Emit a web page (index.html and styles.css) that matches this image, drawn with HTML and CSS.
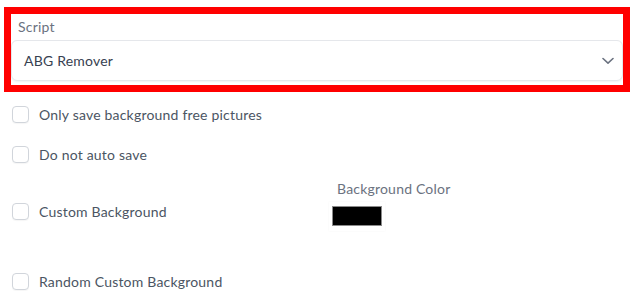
FILE: index.html
```html
<!DOCTYPE html>
<html lang="en">
  <head>
    <meta charset="UTF-8" />
    <title>ABG Remover</title>
    <link rel="stylesheet" href="styles.css">
  </head>
  <body>
    <div class="page">
      <div class="scriptBlock">
        <span class="blockLabel">Script</span>
        <div class="select">
          <span class="selectValue">ABG Remover</span>
          <svg class="chevron" width="12" height="8" viewBox="0 0 12 8">
            <path d="M1 1.5 L6 6.2 L11 1.5" fill="none" stroke="#6b7280" stroke-width="1.6" stroke-linecap="round" stroke-linejoin="round" />
          </svg>
        </div>
      </div>

      <div class="options">
        <label class="checkRow first">
          <span class="box"></span>
          <span>Only save background free pictures</span>
        </label>
        <label class="checkRow second">
          <span class="box"></span>
          <span>Do not auto save</span>
        </label>

        <div class="customRow">
          <div class="leftCol">
            <label class="checkRow">
              <span class="box"></span>
              <span>Custom Background</span>
            </label>
          </div>
          <div class="rightCol">
            <span class="colorLabel">Background Color</span>
            <div class="swatchWrap">
              <div class="swatch"></div>
            </div>
          </div>
        </div>

        <label class="checkRow last">
          <span class="box"></span>
          <span>Random Custom Background</span>
        </label>
      </div>
    </div>
  </body>
</html>
```

FILE: styles.css
```css
html,
body {
  margin: 0;
  padding: 0;
  background: #ffffff;
  font-family: Lato, "Liberation Sans", sans-serif;
  font-size: 14px;
  letter-spacing: 0.2px;
  color: #4b5563;
}

.page {
  padding: 7px 7px 0 4px;
}

.scriptBlock {
  border: 7px solid #ff0000;
  background: #ffffff;
  padding: 0 0 4px 0;
}
.blockLabel {
  display: block;
  padding: 4px 0 0 7px;
  line-height: 18px;
  margin-bottom: 4px;
  color: #6b7280;
}
.select {
  display: flex;
  align-items: center;
  justify-content: space-between;
  height: 39px;
  padding: 0 8px 0 12px;
  border: 1px solid #e5e7eb;
  border-radius: 6px;
  box-shadow: 0 1px 2px rgba(0, 0, 0, 0.06);
  color: #374151;
}
.chevron {
  display: block;
}

.options {
  padding-left: 8px;
}
.checkRow {
  display: flex;
  align-items: center;
  gap: 10px;
  height: 20px;
}
.checkRow.first {
  margin-top: 12px;
}
.checkRow.second {
  margin-top: 20px;
}
.checkRow.last {
  margin-top: 37px;
}
.box {
  width: 15px;
  height: 15px;
  border: 1px solid #d1d5db;
  border-radius: 4px;
  background: #ffffff;
  box-shadow: 0 1px 1px rgba(0, 0, 0, 0.04);
}

.customRow {
  display: grid;
  grid-template-columns: 317px 1fr;
  margin-top: 13px;
}
.leftCol .checkRow {
  margin-top: 24px;
}
.colorLabel {
  display: block;
  padding-left: 8px;
  margin-top: 2px;
  line-height: 20px;
  color: #6b7280;
}
.swatchWrap {
  display: inline-block;
  margin-top: 3px;
  padding: 4px 3px 5px 3px;
  background: #ffffff;
  box-shadow: 0 0 2px rgba(0, 0, 0, 0.04);
}
.swatch {
  width: 48px;
  height: 18px;
  background: #000000;
  border: 1px solid #8a8a8a;
}
```
